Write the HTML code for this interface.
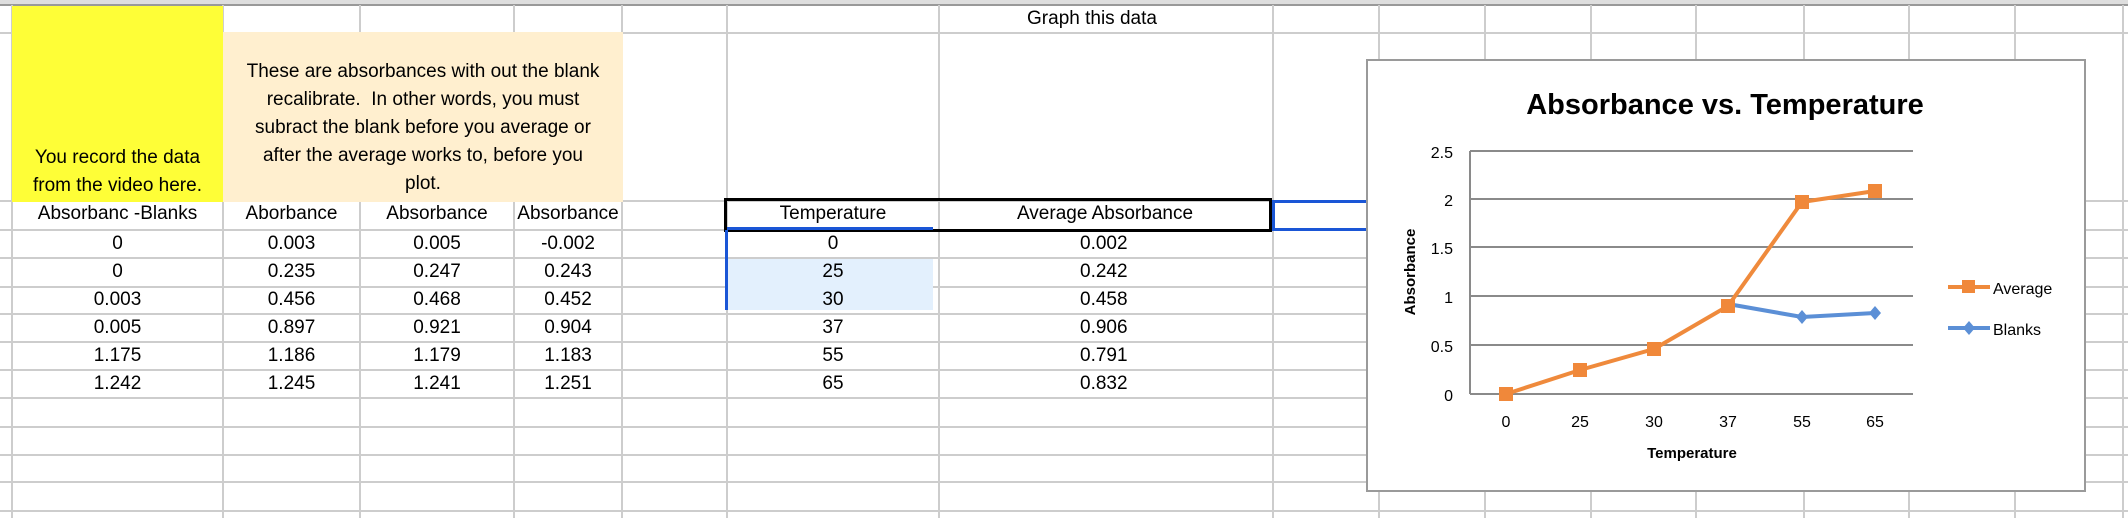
<!DOCTYPE html>
<html><head><meta charset="utf-8"><style>
body{margin:0;width:2128px;height:518px;overflow:hidden;background:#fff;position:relative;font-family:"Liberation Sans",sans-serif;font-size:19px;color:#000}
.h{position:absolute;left:0;width:2128px;height:2px;background:#cdcdcd}
.v{position:absolute;top:5px;width:2px;height:513px;background:#cdcdcd}
.t{position:absolute;text-align:center;white-space:nowrap;line-height:28px}
.a{position:absolute}
</style></head><body>
<div class="a" style="left:0;top:0;width:2128px;height:4px;background:#dedede"></div>
<div class="a" style="left:0;top:4px;width:2128px;height:2px;background:#999"></div>
<!-- horizontal grid -->
<div class="h" style="top:32px"></div><div class="h" style="top:200px"></div><div class="h" style="top:229px"></div><div class="h" style="top:257px"></div><div class="h" style="top:286px"></div><div class="h" style="top:313px"></div><div class="h" style="top:341px"></div><div class="h" style="top:369px"></div><div class="h" style="top:397px"></div><div class="h" style="top:426px"></div><div class="h" style="top:454px"></div><div class="h" style="top:481px"></div><div class="h" style="top:510px"></div>
<!-- vertical grid -->
<div class="v" style="left:11px"></div><div class="v" style="left:222px"></div><div class="v" style="left:359px"></div><div class="v" style="left:513px"></div><div class="v" style="left:621px"></div><div class="v" style="left:726px"></div><div class="v" style="left:938px"></div><div class="v" style="left:1272px"></div><div class="v" style="left:1378px"></div><div class="v" style="left:1484px"></div><div class="v" style="left:1590px"></div><div class="v" style="left:1695px"></div><div class="v" style="left:1803px"></div><div class="v" style="left:1908px"></div><div class="v" style="left:2014px"></div><div class="v" style="left:2122px"></div>
<!-- yellow & peach -->
<div class="a" style="left:12px;top:6px;width:211px;height:196px;background:#fefe37"></div>
<div class="a" style="left:223px;top:32px;width:400px;height:170px;background:#ffefcf"></div>
<div class="t" style="left:12px;top:144px;width:211px">You record the data<br>from the video here.</div>
<div class="t" style="left:223px;top:58px;width:400px">These are absorbances with out the blank<br>recalibrate.&nbsp; In other words, you must<br>subract the blank before you average or<br>after the average works to, before you<br>plot.</div>
<div class="t" style="left:990px;top:5px;width:204px">Graph this data</div>
<!-- headers -->
<div class="t" style="left:12px;top:200px;width:211px">Absorbanc -Blanks</div>
<div class="t" style="left:223px;top:200px;width:137px">Aborbance</div>
<div class="t" style="left:360px;top:200px;width:154px">Absorbance</div>
<div class="t" style="left:514px;top:200px;width:108px">Absorbance</div>
<!-- temp table -->
<div class="a" style="left:727px;top:259px;width:206px;height:51px;background:#e3f0fd"></div>
<div class="a" style="left:724px;top:198px;width:545px;height:28px;border:3px solid #000;box-sizing:content-box;width:542px"></div>
<div class="a" style="left:727px;top:227px;width:206px;height:3px;background:#1a56d6"></div>
<div class="a" style="left:725px;top:230px;width:3px;height:80px;background:#1a56d6"></div>
<div class="a" style="left:1272px;top:200px;width:94px;height:3px;background:#1a56d6"></div>
<div class="a" style="left:1272px;top:228px;width:94px;height:3px;background:#1a56d6"></div>
<div class="a" style="left:1272px;top:200px;width:3px;height:31px;background:#1a56d6"></div>
<div class="t" style="left:727px;top:200px;width:212px">Temperature</div>
<div class="t" style="left:939px;top:200px;width:332px">Average Absorbance</div>
<div id="rows"></div>
<div class="t" style="left:12px;top:230px;width:211px">0<br>0<br>0.003<br>0.005<br>1.175<br>1.242</div>
<div class="t" style="left:223px;top:230px;width:137px">0.003<br>0.235<br>0.456<br>0.897<br>1.186<br>1.245</div>
<div class="t" style="left:360px;top:230px;width:154px">0.005<br>0.247<br>0.468<br>0.921<br>1.179<br>1.241</div>
<div class="t" style="left:514px;top:230px;width:108px">-0.002<br>0.243<br>0.452<br>0.904<br>1.183<br>1.251</div>
<div class="t" style="left:727px;top:230px;width:212px">0<br>25<br>30<br>37<br>55<br>65</div>
<div class="t" style="left:1080px;top:230px;text-align:left">0.002<br>0.242<br>0.458<br>0.906<br>0.791<br>0.832</div>
<!-- chart -->
<div class="a" style="left:1366px;top:59px;width:716px;height:429px;border:2px solid #9a9a9a;background:#fff"></div>
<svg class="a" style="left:0;top:0" width="2128" height="518">
<g font-family="Liberation Sans, sans-serif">
<text x="1725" y="114" text-anchor="middle" font-size="29" font-weight="bold">Absorbance vs. Temperature</text>
<g stroke="#8a8a8a" stroke-width="2">
<line x1="1470" y1="151" x2="1913" y2="151"/><line x1="1470" y1="199" x2="1913" y2="199"/><line x1="1470" y1="247" x2="1913" y2="247"/><line x1="1470" y1="296" x2="1913" y2="296"/><line x1="1470" y1="345" x2="1913" y2="345"/><line x1="1470" y1="394" x2="1913" y2="394"/><line x1="1470" y1="151" x2="1470" y2="394"/>
</g>
<g font-size="16" text-anchor="end">
<text x="1453" y="158">2.5</text><text x="1453" y="206">2</text><text x="1453" y="254">1.5</text><text x="1453" y="303">1</text><text x="1453" y="352">0.5</text><text x="1453" y="401">0</text>
</g>
<g font-size="16" text-anchor="middle">
<text x="1506" y="427">0</text><text x="1580" y="427">25</text><text x="1654" y="427">30</text><text x="1728" y="427">37</text><text x="1802" y="427">55</text><text x="1875" y="427">65</text>
<text x="1692" y="458" font-weight="bold" font-size="15">Temperature</text>
</g>
<text transform="translate(1415,272) rotate(-90)" text-anchor="middle" font-size="15" font-weight="bold">Absorbance</text>
<polyline points="1728,304 1802,317 1875,313" fill="none" stroke="#5b8fd6" stroke-width="4"/>
<g fill="#5b8fd6"><path d="M1802,310 l6,7 l-6,7 l-6,-7z"/><path d="M1875,306 l6,7 l-6,7 l-6,-7z"/></g>
<polyline points="1506,394 1580,370 1654,349 1728,306 1802,202 1875,191" fill="none" stroke="#ef8a3c" stroke-width="4"/>
<g fill="#f0883a"><rect x="1499" y="387" width="14" height="14"/><rect x="1573" y="363" width="14" height="14"/><rect x="1647" y="342" width="14" height="14"/><rect x="1721" y="299" width="14" height="14"/><rect x="1795" y="195" width="14" height="14"/><rect x="1868" y="184" width="14" height="14"/></g>
<line x1="1948" y1="287" x2="1990" y2="287" stroke="#ef8a3c" stroke-width="4"/><rect x="1962" y="280" width="13" height="13" fill="#f0883a"/>
<line x1="1948" y1="328" x2="1990" y2="328" stroke="#5b8fd6" stroke-width="4"/><path d="M1969,321 l6,7 l-6,7 l-6,-7z" fill="#5b8fd6"/>
<text x="1993" y="294" font-size="16">Average</text>
<text x="1993" y="335" font-size="16">Blanks</text>
</g></svg>
</body></html>
